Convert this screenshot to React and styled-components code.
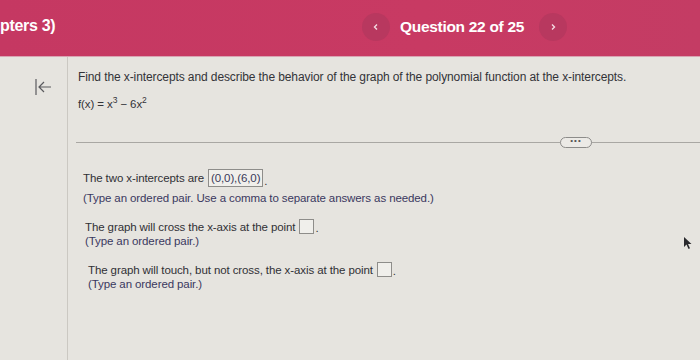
import React from "react";
import styled, { createGlobalStyle } from "styled-components";

const GlobalStyle = createGlobalStyle`
  html, body {
    margin: 0;
    padding: 0;
    background: #e6e4df;
    font-family: "Liberation Sans", Arial, sans-serif;
  }
`;

const Page = styled.div`
  position: relative;
  width: 700px;
  height: 360px;
  overflow: hidden;
  display: flex;
  flex-direction: column;
  background: #e6e4df;
`;

const Header = styled.header`
  height: 56px;
  flex-shrink: 0;
  background: linear-gradient(90deg, #c53862 0%, #c83a63 60%, #c43c64 100%);
  border-bottom: 1px solid #d9a4b3;
  display: flex;
  align-items: center;
  color: #fff;
`;

const Chapter = styled.div`
  width: 362px;
  font-size: 16px;
  font-weight: 700;
  letter-spacing: -0.3px;
  margin-top: -4px;
`;

const Nav = styled.div`
  display: flex;
  align-items: center;
  gap: 10px;
  margin-top: -2px;
`;

const NavButton = styled.button`
  width: 28px;
  height: 28px;
  border: none;
  border-radius: 50%;
  background: #b8385f;
  color: #f4dbe3;
  display: flex;
  align-items: center;
  justify-content: center;
  padding: 0;
  margin: 0 ${(p) => p.$gap || 0}px;
`;

const QuestionTitle = styled.div`
  font-size: 15.5px;
  font-weight: 700;
  letter-spacing: -0.3px;
`;

const Body = styled.div`
  flex: 1;
  display: flex;
`;

const Sidebar = styled.div`
  width: 68px;
  flex-shrink: 0;
  border-right: 1px solid #cbc8c2;
  padding: 21px 0 0 34px;
  box-sizing: border-box;
`;

const Content = styled.div`
  flex: 1;
  display: flex;
  flex-direction: column;
  padding-top: 13px;
`;

const Prompt = styled.div`
  padding-left: 10px;
  color: #333338;
  font-size: 12px;
  letter-spacing: -0.1px;
`;

const Formula = styled.div`
  margin-top: 14px;
  font-size: 11.5px;
  color: #333338;
  sup {
    font-size: 8.5px;
    line-height: 0;
  }
`;

const Divider = styled.div`
  position: relative;
  margin: 32px 0 0 8px;
  border-top: 1px solid #a9a7a3;
  display: flex;
  justify-content: flex-end;
  padding-right: 108px;
`;

const Ellipsis = styled.span`
  margin-top: -6px;
  width: 30px;
  height: 9px;
  border: 1px solid #8d8c8a;
  border-radius: 6px;
  background: #eceae6;
  color: #555;
  font-size: 8px;
  line-height: 5px;
  text-align: center;
  letter-spacing: 1px;
`;

const Answers = styled.div`
  padding: 21px 0 0 15px;
  display: flex;
  flex-direction: column;
  gap: 15px;
`;

const Part = styled.div`
  display: flex;
  flex-direction: column;
  gap: ${(p) => p.$gap ?? 1}px;
  padding-left: ${(p) => p.$indent || 0}px;
`;

const Line = styled.div`
  display: flex;
  align-items: center;
  font-size: 11.5px;
  color: #303035;
  letter-spacing: -0.1px;
`;

const Hint = styled.div`
  font-size: 11.5px;
  color: #3a3860;
  letter-spacing: -0.1px;
`;

const AnswerBox = styled.span`
  display: inline-flex;
  align-items: center;
  margin-left: 4px;
  min-width: ${(p) => (p.$empty ? 13 : 0)}px;
  height: ${(p) => (p.$empty ? 13 : 16)}px;
  padding: 0 ${(p) => (p.$empty ? 0 : 2)}px;
  border: 1px solid #8e8d8a;
  background: #f0efeb;
  color: #3a3a5a;
`;

const Dot = styled.span`
  margin-left: 1px;
  align-self: flex-end;
`;

const Cursor = styled.svg`
  position: absolute;
  left: 683px;
  top: 236px;
`;

function Chevron({ dir }) {
  return (
    <svg width="8" height="8" viewBox="0 0 8 8">
      <path
        d={dir === "left" ? "M5 1.5 L2.5 4 L5 6.5" : "M3 1.5 L5.5 4 L3 6.5"}
        fill="none"
        stroke="currentColor"
        strokeWidth="1.4"
      />
    </svg>
  );
}

function BackIcon() {
  return (
    <svg width="18" height="18" viewBox="0 0 18 18">
      <path d="M2 1 V17" stroke="#5a5a5e" strokeWidth="1.2" />
      <path d="M5 9 H17 M10 4 L5 9 L10 14" fill="none" stroke="#5a5a5e" strokeWidth="1.2" />
    </svg>
  );
}

export default function App() {
  return (
    <>
      <GlobalStyle />
      <Page>
        <Header>
          <Chapter>pters 3)</Chapter>
          <Nav>
            <NavButton aria-label="previous">
              <Chevron dir="left" />
            </NavButton>
            <QuestionTitle>Question 22 of 25</QuestionTitle>
            <NavButton aria-label="next" $gap={5}>
              <Chevron dir="right" />
            </NavButton>
          </Nav>
        </Header>
        <Body>
          <Sidebar>
            <BackIcon />
          </Sidebar>
          <Content>
            <Prompt>
              Find the x-intercepts and describe the behavior of the graph of the polynomial
              function at the x-intercepts.
              <Formula>
                f(x) = x<sup>3</sup> − 6x<sup>2</sup>
              </Formula>
            </Prompt>
            <Divider>
              <Ellipsis>•••</Ellipsis>
            </Divider>
            <Answers>
              <Part $gap={5}>
                <Line>
                  The two x-intercepts are
                  <AnswerBox>(0,0),(6,0)</AnswerBox>
                  <Dot>.</Dot>
                </Line>
                <Hint>(Type an ordered pair. Use a comma to separate answers as needed.)</Hint>
              </Part>
              <Part $indent={2}>
                <Line>
                  The graph will cross the x-axis at the point
                  <AnswerBox $empty />
                  <Dot>.</Dot>
                </Line>
                <Hint>(Type an ordered pair.)</Hint>
              </Part>
              <Part $indent={5}>
                <Line>
                  The graph will touch, but not cross, the x-axis at the point
                  <AnswerBox $empty />
                  <Dot>.</Dot>
                </Line>
                <Hint>(Type an ordered pair.)</Hint>
              </Part>
            </Answers>
          </Content>
        </Body>
        <Cursor width="10" height="14" viewBox="0 0 10 14">
          <path d="M1 1 L1 11 L3.5 8.5 L5.5 13 L7 12.3 L5 8 L8.5 8 Z" fill="#2a2a2e" />
        </Cursor>
      </Page>
    </>
  );
}
